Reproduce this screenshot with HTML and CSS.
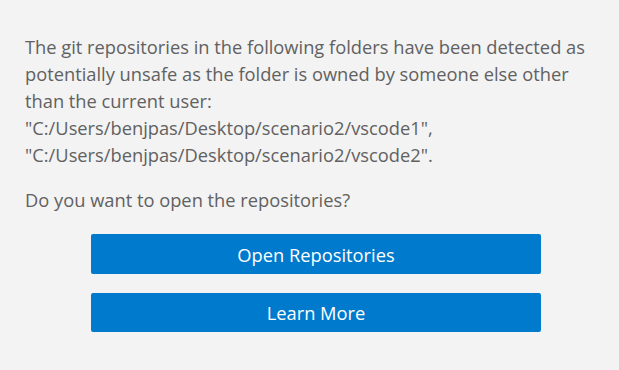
FILE: index.html
```html
<!DOCTYPE html>
<html lang="en">
<head>
    <meta charset="UTF-8">
    <title>Unsafe repositories</title>
    <link rel="stylesheet" href="styles.css">
</head>
<body>
    <div class="dialog">
        <div class="message">
            <p>The git repositories in the following folders have been detected as potentially unsafe as the folder is owned by someone else other than the current user:<br>"C:/Users/benjpas/Desktop/scenario2/vscode1",<br>"C:/Users/benjpas/Desktop/scenario2/vscode2".</p>
            <p>Do you want to open the repositories?</p>
        </div>

        <div class="actions">
            <button>Open Repositories</button>
            <button>Learn More</button>
        </div>
    </div>
</body>
</html>
```

FILE: styles.css
```css
* {
    box-sizing: border-box;
    margin: 0;
    padding: 0;
}

body {
    background: #f3f3f3;
    font-family: 'Open Sans', sans-serif;
    color: #616161;
}

.dialog {
    width: 619px;
    height: 370px;
    padding: 33px 25px 0 25px;
}

.message {
    margin-bottom: 21px;
}

.message p {
    font-size: 18.3px;
    line-height: 27px;
    margin-bottom: 18px;
}

.message p:last-child {
    margin-bottom: 0;
}

.actions {
    display: flex;
    flex-direction: column;
    gap: 19px;
    margin-left: 66px;
    width: 450px;
}

.actions button {
    height: 40px;
    border: none;
    border-radius: 2px;
    background: #007acc;
    color: #ffffff;
    font-family: 'Open Sans', sans-serif;
    font-size: 18.3px;
}

.actions button + button {
    height: 39px;
}
```
